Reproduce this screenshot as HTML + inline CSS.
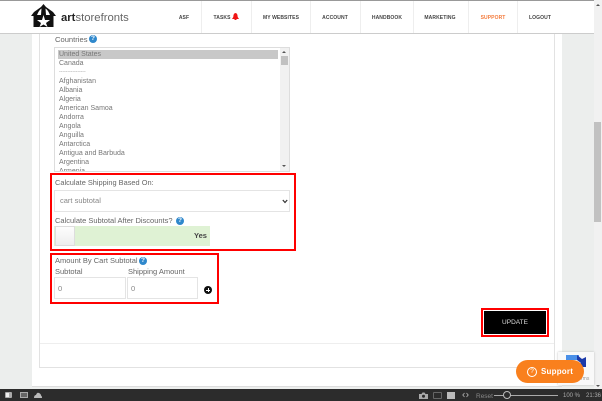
<!DOCTYPE html>
<html><head><meta charset="utf-8">
<style>
html,body{margin:0;padding:0;width:602px;height:401px;overflow:hidden;background:#eceeed;font-family:"Liberation Sans",sans-serif;}
.a{position:absolute;}
.t{position:absolute;white-space:nowrap;color:#666;font-size:7.5px;line-height:9px;}
.n{position:absolute;top:13.500px;font-size:5px;line-height:8px;font-weight:bold;color:#444;white-space:nowrap;transform:translateX(-50%);letter-spacing:.1px;}
.s{position:absolute;top:1px;width:1px;height:32px;background:#eee;}
.q{position:absolute;width:8px;height:8px;border-radius:50%;background:#2f88cc;color:#fff;font-size:6.500px;line-height:8px;text-align:center;font-weight:bold;}
.r{position:absolute;border:2px solid #f00;box-sizing:border-box;}
.o{position:absolute;left:59px;font-size:7px;line-height:9px;color:#777;white-space:nowrap;}
.i{position:absolute;border:1px solid #e4e4e4;box-sizing:border-box;background:#fff;font-size:7.500px;color:#888;padding-left:5px;}
</style></head><body>
<div class="a" style="left:32px;top:33px;width:530px;height:354px;background:#fff;border-bottom:1px solid #ddd;box-sizing:border-box;"></div>
<div class="a" style="left:39px;top:33px;width:516px;height:335px;border:1px solid #e2e2e2;border-top:0;box-sizing:border-box;"></div>
<div class="a" style="left:40px;top:343px;width:514px;height:1px;background:#eee;"></div>

<!-- header -->
<div class="a" style="left:0;top:0;width:594px;height:34px;background:#fff;border-top:1px solid #999;border-bottom:1px solid #ccc;box-sizing:border-box;"></div>
<svg class="a" style="left:31px;top:4px" width="25" height="24" viewBox="0 0 25 24">
<path d="M12.500 0 L15 3 L22 8 L25 12 L22.500 12 L22.500 23 L2.500 23 L2.500 12 L0 12 L3 8 L10 3Z" fill="#111"/>
<path d="M6 11 Q8 6 10.500 4.500 L10 11Z M14.500 4.500 Q17 6 19 11 L15 11Z" fill="#fff"/>
<path d="M12.500 11 L14 16 L19 16 L15 19 L16.500 23 L12.500 20.500 L8.500 23 L10 19 L6 16 L11 16Z" fill="#fff"/>
</svg>
<div class="t" style="left:61px;top:10.500px;font-size:11.300px;line-height:14px;color:#666;"><b style="color:#222">art</b>storefronts</div>
<div class="s" style="left:201px"></div><div class="s" style="left:251px"></div><div class="s" style="left:310px"></div><div class="s" style="left:360px"></div><div class="s" style="left:413px"></div><div class="s" style="left:468px"></div><div class="s" style="left:517px"></div>
<div class="n" style="left:184px">ASF</div>
<div class="n" style="left:222px">TASKS</div>
<svg class="a" style="left:232px;top:13px" width="7" height="7" viewBox="0 0 7 7"><path d="M3.500 0 C5.500 .5 5.500 2 5.700 4 L7 6 L0 6 L1.300 4 C1.500 2 1.500 .5 3.500 0Z" fill="#f01515"/><rect x="2.500" y="6" width="2" height="1" fill="#f01515"/></svg>
<div class="n" style="left:281px">MY WEBSITES</div>
<div class="n" style="left:335px">ACCOUNT</div>
<div class="n" style="left:387px">HANDBOOK</div>
<div class="n" style="left:440px">MARKETING</div>
<div class="n" style="left:493px;color:#f47b3c">SUPPORT</div>
<div class="n" style="left:540px">LOGOUT</div>

<!-- page scrollbar -->
<div class="a" style="left:594px;top:0;width:8px;height:389px;background:#f1f1f1;"></div>
<div class="a" style="left:594px;top:122px;width:7px;height:100px;background:#c1c1c1;"></div>
<div class="a" style="left:596px;top:4px;width:0;height:0;border:2px solid transparent;border-bottom:2px solid #555;border-top:0"></div>
<div class="a" style="left:596px;top:385px;width:0;height:0;border:2px solid transparent;border-top:2px solid #555;border-bottom:0"></div>

<!-- countries -->
<div class="t" style="left:55px;top:35px;font-size:7.600px;">Countries</div>
<div class="q" style="left:89px;top:35px">?</div>
<div class="a" style="left:54px;top:47px;width:236px;height:125px;border:1px solid #ddd;box-sizing:border-box;background:#fff;overflow:hidden;">
<div class="a" style="left:3px;top:2px;width:220px;height:9px;background:#c8c8c8;"></div>
<div class="a" style="right:0;top:0;width:9px;height:123px;background:#f1f1f1;"></div>
<div class="a" style="right:1px;top:8px;width:7px;height:9px;background:#c1c1c1;"></div>
<div class="a" style="right:3px;top:3px;width:0;height:0;border:2px solid transparent;border-bottom:2px solid #555;border-top:0"></div>
<div class="a" style="right:3px;top:117px;width:0;height:0;border:2px solid transparent;border-top:2px solid #555;border-bottom:0"></div>
</div>
<div style="position:absolute;left:0;top:48px;width:290px;height:123px;overflow:hidden;">
<div class="o" style="top:2px">United States</div>
<div class="o" style="top:11px">Canada</div>
<div class="o" style="top:20px;font-size:5px;color:#999">----------------</div>
<div class="o" style="top:29px">Afghanistan</div>
<div class="o" style="top:38px">Albania</div>
<div class="o" style="top:47px">Algeria</div>
<div class="o" style="top:56px">American Samoa</div>
<div class="o" style="top:65px">Andorra</div>
<div class="o" style="top:74px">Angola</div>
<div class="o" style="top:83px">Anguilla</div>
<div class="o" style="top:92px">Antarctica</div>
<div class="o" style="top:101px">Antigua and Barbuda</div>
<div class="o" style="top:110px">Argentina</div>
<div class="o" style="top:119px">Armenia</div>
</div>

<!-- shipping -->
<div class="r" style="left:50px;top:173px;width:246px;height:78px;"></div>
<div class="t" style="left:55px;top:178px;font-size:7.400px;">Calculate Shipping Based On:</div>
<div class="i" style="left:54px;top:190px;width:236px;height:22px;line-height:20px;">cart subtotal</div>
<svg class="a" style="left:282px;top:199px" width="6" height="5" viewBox="0 0 6 5"><path d="M.8 1 L3 3.500 L5.200 1" fill="none" stroke="#333" stroke-width="1.200"/></svg>
<div class="t" style="left:55px;top:216px;font-size:7.500px;">Calculate Subtotal After Discounts?</div>
<div class="q" style="left:176px;top:217px">?</div>
<div class="a" style="left:54px;top:226px;width:156px;height:20px;background:#dff2d4;"></div>
<div class="a" style="left:55px;top:226px;width:20px;height:20px;background:linear-gradient(#fdfdfd,#eee);border:1px solid #ddd;box-sizing:border-box;"></div>
<div class="t" style="left:194px;top:231px;font-weight:bold;font-size:7.500px;color:#444;">Yes</div>

<!-- amount -->
<div class="r" style="left:50px;top:253px;width:169px;height:51px;"></div>
<div class="t" style="left:55px;top:256px;font-size:7.500px;">Amount By Cart Subtotal</div>
<div class="q" style="left:139px;top:257px">?</div>
<div class="t" style="left:55px;top:267px;font-size:7.500px;">Subtotal</div>
<div class="t" style="left:128px;top:267px;font-size:7.500px;">Shipping Amount</div>
<div class="i" style="left:54px;top:277px;width:72px;height:22px;line-height:21px;padding-left:3px;">0</div>
<div class="i" style="left:127px;top:277px;width:71px;height:22px;line-height:21px;padding-left:3px;">0</div>
<div class="a" style="left:204px;top:286px;width:8px;height:8px;border-radius:50%;background:#111;"></div>
<div class="a" style="left:206px;top:289.500px;width:4px;height:1px;background:#fff;"></div>
<div class="a" style="left:207.500px;top:288px;width:1px;height:4px;background:#fff;"></div>

<!-- update -->
<div class="a" style="left:481px;top:308px;width:68px;height:29px;border:2px solid #f00;box-sizing:border-box;background:#fff;"></div>
<div class="a" style="left:484px;top:311px;width:62px;height:23px;background:#000;color:#ddd;font-size:6.500px;line-height:23px;text-align:center;">UPDATE</div>

<!-- recaptcha -->
<div class="a" style="left:558px;top:352px;width:36px;height:33px;background:#f9f9f9;box-shadow:0 0 2px #bbb;"></div>
<svg class="a" style="left:566px;top:354px" width="22" height="14" viewBox="0 0 22 14"><path d="M0 1 H13 V6 H0Z" fill="#4a90e8"/><path d="M11 1 L16 5 L20 3 L20 13 L11 13 L15 9 L11 6Z" fill="#1c3aa9"/></svg>
<div class="t" style="left:581px;top:375px;font-size:5px;color:#999;">rms</div>
<div class="a" style="left:516px;top:360px;width:68px;height:23px;border-radius:12px;background:#f9801d;"></div>
<div class="a" style="left:527px;top:367px;width:10px;height:10px;border:1px solid #fff;border-radius:50%;box-sizing:border-box;color:#fff;font-size:6.500px;line-height:8px;text-align:center;">?</div>
<div class="t" style="left:541px;top:367px;color:#fff;font-weight:bold;font-size:8px;letter-spacing:.2px;">Support</div>

<!-- status bar -->
<div class="a" style="left:0;top:389px;width:602px;height:12px;background:#2c2c2c;"></div>
<div class="a" style="left:5px;top:392px;width:7px;height:6px;background:#aaa;border-radius:1px;"></div>
<div class="a" style="left:6px;top:393px;width:3px;height:4px;background:#eee;"></div>
<div class="a" style="left:20px;top:392px;width:8px;height:6px;background:#666;border:1px solid #aaa;box-sizing:border-box;"></div>
<svg class="a" style="left:34px;top:392px" width="8" height="6" viewBox="0 0 8 6"><path d="M0 6 Q0 3 2 3 Q3 0 5 1 Q7 2 7 3.500 Q8 4 8 6Z" fill="#bbb"/></svg>
<svg class="a" style="left:419px;top:392px" width="9" height="7" viewBox="0 0 9 7"><path d="M0 2 H2.500 L3.500 .5 H5.500 L6.500 2 H9 V7 H0Z" fill="#aaa"/><circle cx="4.500" cy="4.300" r="1.500" fill="#2c2c2c"/></svg>
<div class="a" style="left:433px;top:392px;width:9px;height:7px;border:1px solid #666;box-sizing:border-box;border-radius:1px;"></div>
<div class="a" style="left:447px;top:392px;width:8px;height:7px;background:#bbb;"></div>
<svg class="a" style="left:462px;top:392px" width="7" height="6" viewBox="0 0 7 6"><path d="M2.500 1 L.8 3 L2.500 5 M4.500 1 L6.200 3 L4.500 5" fill="none" stroke="#aaa" stroke-width=".9"/></svg>
<div class="t" style="left:476px;top:392px;font-size:6.500px;color:#888;">Reset</div>
<div class="a" style="left:494px;top:394.500px;width:64px;height:1.500px;background:#aaa;"></div>
<div class="a" style="left:503px;top:391px;width:8px;height:8px;border:1px solid #bbb;border-radius:50%;box-sizing:border-box;background:#2c2c2c;"></div>
<div class="t" style="left:563px;top:392px;font-size:6px;color:#aaa;">100 %</div>
<div class="t" style="left:586px;top:392px;font-size:6px;color:#aaa;">21:36</div>
</body></html>
